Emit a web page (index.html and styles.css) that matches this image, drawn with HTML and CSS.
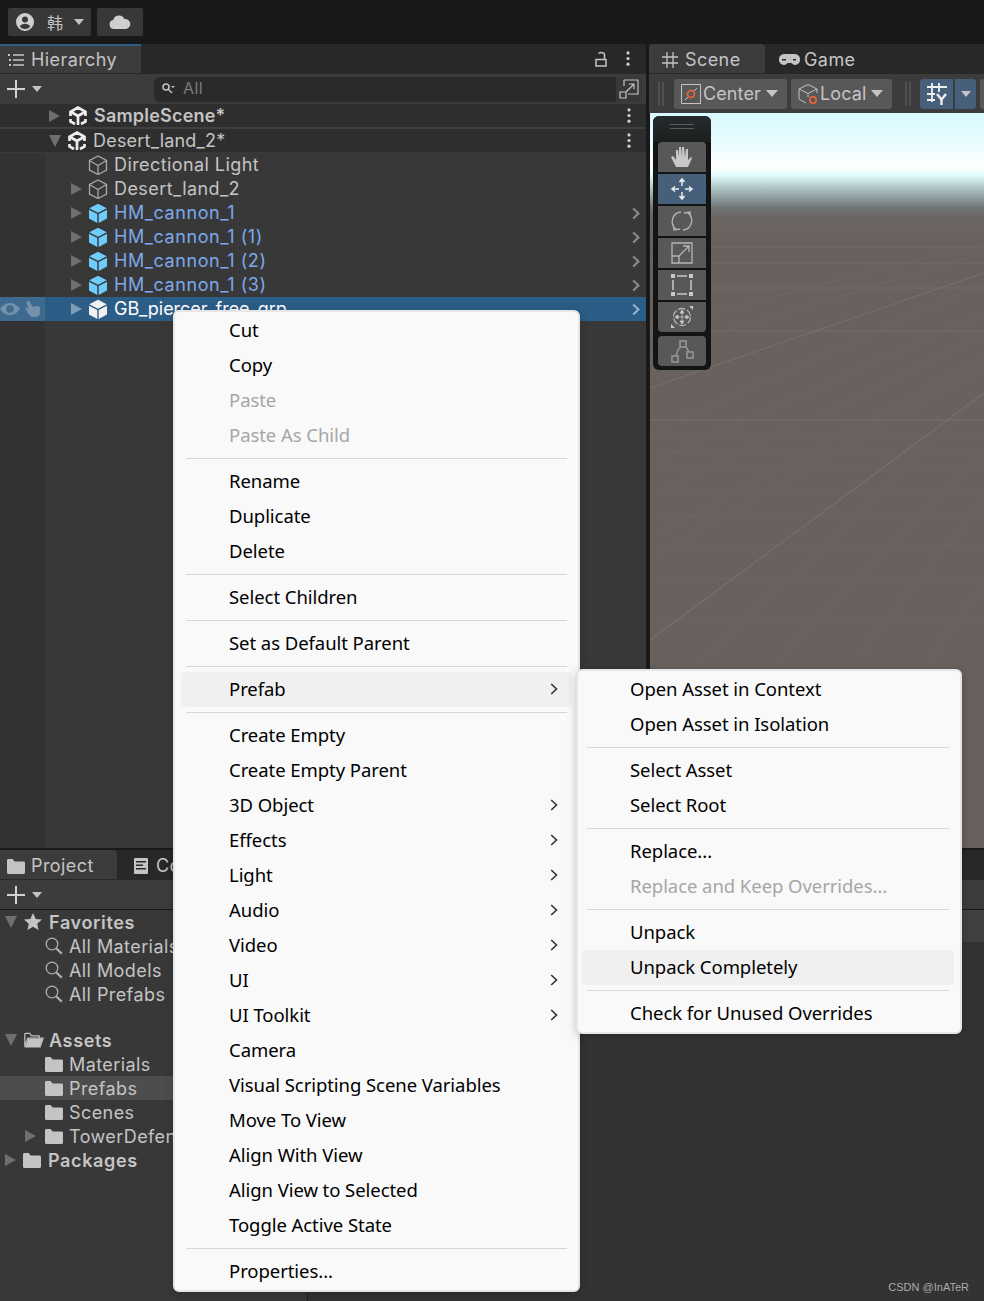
FILE: index.html
```html
<!DOCTYPE html>
<html lang="en">

<head>
    <meta charset="UTF-8">
    <title>Unity Editor</title>
    <link rel="stylesheet" href="styles.css">
</head>

<body>
    <svg class="sprite" width="0" height="0">
        <symbol id="i-unity" viewBox="0 0 20 20">
            <path d="M10 10 4 6.500M10 10l6-3.500M10 10v9M2.500 10V5.800L10 1.500l7.500 4.300V10M2.500 13v2.500L7 18M17.500 13v2.500L13 18" fill="none" stroke="currentColor" stroke-width="2.700"/>
        </symbol>
        <symbol id="i-cube" viewBox="0 0 20 20">
            <path d="M10 1 18.500 5.500V15L10 19.500 1.500 15V5.500zM1.500 5.500 10 10.500 18.500 5.500M10 10.500v9" fill="none" stroke="currentColor" stroke-width="1.300"/>
        </symbol>
        <symbol id="i-prefab" viewBox="0 0 20 20">
            <path d="M10 .8 18.800 5.300 10 9.800 1.200 5.300zM1 6.800l8.300 4.300v8.900L1 15.500zM19 6.800l-8.300 4.300v8.900l8.300-4.500z" fill="currentColor"/>
        </symbol>
        <symbol id="i-folder" viewBox="0 0 18 16">
            <path d="M0 2.500C0 1.700.6 1 1.400 1h4.200l2 2.600h9C17.400 3.600 18 4.200 18 5v9.500c0 .8-.6 1.500-1.400 1.500H1.400C.6 16 0 15.300 0 14.500z" fill="currentColor"/>
        </symbol>
        <symbol id="i-folder-open" viewBox="0 0 20 16">
            <path d="M.8 14V2.200c0-.5.3-.8.800-.8h4l2 2.400h7c.5 0 .8.300.8.800v1.300M.8 14.500l3-8.400h15.400l-3 8.900H1.400z" fill="none" stroke="currentColor" stroke-width="1.200"/>
            <path d="M1.400 15l2.800-8.300h14.300L15.800 15z" fill="currentColor"/>
        </symbol>
        <symbol id="i-search" viewBox="0 0 18 18">
            <circle cx="7" cy="7" r="5.800" fill="none" stroke="currentColor" stroke-width="1.300"/>
            <path d="M11.200 11.200l5.600 5.600" stroke="currentColor" stroke-width="2.200"/>
        </symbol>
        <symbol id="i-chevron" viewBox="0 0 8 12">
            <path d="M1.200 1 6.500 6 1.200 11" fill="none" stroke="currentColor"/>
        </symbol>
        <symbol id="i-kebab" viewBox="0 0 4 16">
            <circle cx="2" cy="2" r="1.700" fill="currentColor"/>
            <circle cx="2" cy="8" r="1.700" fill="currentColor"/>
            <circle cx="2" cy="14" r="1.700" fill="currentColor"/>
        </symbol>
        <symbol id="i-plus" viewBox="0 0 18 18">
            <path d="M9 0v18M0 9h18" stroke="currentColor" stroke-width="2"/>
        </symbol>
    </svg>

    <div class="app">
        <header class="topbar">
            <div class="top-btn account">
                <svg class="ic-user" viewBox="0 0 18 18"><path fill-rule="evenodd" d="M9 0a9 9 0 1 0 0 18A9 9 0 0 0 9 0zm0 3.500a3 3 0 1 1 0 6 3 3 0 0 1 0-6zM3.800 13.400c1-1.800 3-2.600 5.200-2.600s4.200.8 5.200 2.600A6.800 6.800 0 0 1 9 16a6.800 6.800 0 0 1-5.200-2.600z" fill="#cfcfcf"/></svg>
                <span class="account-name">韩</span>
                <i class="caret"></i>
            </div>
            <div class="top-btn cloud">
                <svg class="ic-cloud" viewBox="0 0 22 14"><path d="M5 14a4.500 4.500 0 0 1-.8-8.900A6 6 0 0 1 15.500 4 5 5 0 0 1 17 14z" fill="#cfcfcf"/></svg>
            </div>
        </header>

        <main class="workspace">
            <section class="panel hierarchy">
                <div class="tabbar">
                    <div class="tab tab-first">
                        <svg class="ic-tab" viewBox="0 0 16 14"><path d="M5 2h11M5 7h11M5 12h11" stroke="#c4c4c4" stroke-width="1.300"/><path d="M0 1h2v2H0zM1 6h2v2H1zM1 11h2v2H1z" fill="#c4c4c4"/></svg>
                        Hierarchy
                    </div>
                    <div class="tab-tools">
                        <svg class="ic-lock" viewBox="0 0 12 16"><path d="M1 8.500h10v6.500H1zM9.500 8V3.500C9.500 1.500 5.500 1 3.500 2.500" fill="none" stroke="#c4c4c4" stroke-width="1.500"/></svg>
                        <svg class="ic-kebab"><use href="#i-kebab"/></svg>
                    </div>
                </div>
                <div class="toolbar">
                    <svg class="ic-plus"><use href="#i-plus"/></svg>
                    <i class="caret"></i>
                    <div class="searchbox">
                        <svg class="ic-find" viewBox="0 0 14 12"><circle cx="4" cy="4" r="3" fill="none" stroke="#c4c4c4" stroke-width="1.500"/><path d="M6 6l4 4" stroke="#c4c4c4" stroke-width="1.500"/><path d="M9 3h4l-2 2z" fill="#c4c4c4"/></svg>
                        <span class="search-hint">All</span>
                        <span class="search-btn">
                            <svg viewBox="0 0 20 20"><path d="M5 1h14v14H9M5 1v6" fill="none" stroke="#c4c4c4" stroke-width="1.200"/><path d="M1 13h6v6H1zM7 13l8-8M10 5h5v5" fill="none" stroke="#c4c4c4" stroke-width="1.200"/></svg>
                        </span>
                    </div>
                </div>
                <div class="tree">
                    <div class="row scene-row">
                        <i class="arrow"></i>
                        <svg class="ic-node unity"><use href="#i-unity"/></svg>
                        <span class="label bold">SampleScene*</span>
                        <svg class="ic-kebab end"><use href="#i-kebab"/></svg>
                    </div>
                    <div class="row scene-row">
                        <i class="arrow open"></i>
                        <svg class="ic-node unity"><use href="#i-unity"/></svg>
                        <span class="label">Desert_land_2*</span>
                        <svg class="ic-kebab end"><use href="#i-kebab"/></svg>
                    </div>
                    <div class="row depth1">
                        <i class="arrow none"></i>
                        <svg class="ic-node"><use href="#i-cube"/></svg>
                        <span class="label">Directional Light</span>
                    </div>
                    <div class="row depth1">
                        <i class="arrow"></i>
                        <svg class="ic-node"><use href="#i-cube"/></svg>
                        <span class="label">Desert_land_2</span>
                    </div>
                    <div class="row depth1 prefab">
                        <i class="arrow"></i>
                        <svg class="ic-node"><use href="#i-prefab"/></svg>
                        <span class="label">HM_cannon_1</span>
                        <svg class="ic-more"><use href="#i-chevron"/></svg>
                    </div>
                    <div class="row depth1 prefab">
                        <i class="arrow"></i>
                        <svg class="ic-node"><use href="#i-prefab"/></svg>
                        <span class="label">HM_cannon_1 (1)</span>
                        <svg class="ic-more"><use href="#i-chevron"/></svg>
                    </div>
                    <div class="row depth1 prefab">
                        <i class="arrow"></i>
                        <svg class="ic-node"><use href="#i-prefab"/></svg>
                        <span class="label">HM_cannon_1 (2)</span>
                        <svg class="ic-more"><use href="#i-chevron"/></svg>
                    </div>
                    <div class="row depth1 prefab">
                        <i class="arrow"></i>
                        <svg class="ic-node"><use href="#i-prefab"/></svg>
                        <span class="label">HM_cannon_1 (3)</span>
                        <svg class="ic-more"><use href="#i-chevron"/></svg>
                    </div>
                    <div class="row depth1 selected">
                        <div class="row-gutter">
                            <svg class="ic-eye" viewBox="0 0 20 12"><path fill-rule="evenodd" d="M10 0c4.500 0 8 3 10 6-2 3-5.500 6-10 6S2 9 0 6c2-3 5.500-6 10-6zm0 2.200a3.800 3.800 0 1 0 0 7.600 3.800 3.800 0 0 0 0-7.600z" fill="#7391ab"/></svg>
                            <svg class="ic-hand" viewBox="0 0 18 18"><path d="M3 1.500c1-.8 2.200-.3 2.800.5l2.700 4.500 5-.5c1.500 0 2.500 1 2.500 2.500v4c0 2.500-2 4.500-4.500 4.500h-3c-1.500 0-2.500-1-3.300-2L1.500 9c-.5-1 .8-2 1.800-1.200L5 9 2.500 3.300c-.2-.7 0-1.300.5-1.800z" fill="#7391ab"/></svg>
                        </div>
                        <i class="arrow"></i>
                        <svg class="ic-node"><use href="#i-prefab"/></svg>
                        <span class="label">GB_piercer_free_grp</span>
                        <svg class="ic-more"><use href="#i-chevron"/></svg>
                    </div>
                </div>
            </section>

            <section class="panel scene">
                <div class="tabbar">
                    <div class="tab tab-scene">
                        <svg class="ic-tab" viewBox="0 0 16 16"><path d="M5 0v16M11 0v16M0 5h16M0 11h16" stroke="#c4c4c4" stroke-width="1.300"/></svg>
                        Scene
                    </div>
                    <div class="tab tab-plain tab-game">
                        <svg class="ic-game" viewBox="0 0 21 12"><path fill-rule="evenodd" d="M5 0h11a5 5 0 0 1 5 5.500A5 5 0 0 1 16 11c-2 0-3-2-4-2H9c-1 0-2 2-4 2a5 5 0 0 1-5-5.500A5 5 0 0 1 5 0zM3 5v1.500h4V5zm11 0v1.500h3V5z" fill="#c4c4c4"/></svg>
                        Game
                    </div>
                </div>
                <div class="scene-tools">
                    <i class="grip"></i>
                    <div class="drop">
                        <svg class="ic-pivot" viewBox="0 0 20 20"><path d="M.5.500h19v19H.5z" fill="none" stroke="#c4c4c4"/><circle cx="10" cy="10" r="3.500" fill="none" stroke="#f0653a" stroke-width="1.600"/><path d="M4 16l3-3M13 7l3-3" stroke="#c4c4c4"/></svg>
                        <span>Center</span><i class="caret"></i>
                    </div>
                    <div class="drop">
                        <svg class="ic-pivot" viewBox="0 0 20 20"><path d="M10 .5 19 5v4M1 5l9-4.500M1 5v10l7 4M1 5l9 4.500V13M10 9.500 19 5" fill="none" stroke="#c4c4c4"/><circle cx="15" cy="16" r="3.200" fill="none" stroke="#f0653a" stroke-width="1.600"/></svg>
                        <span>Local</span><i class="caret"></i>
                    </div>
                    <i class="grip"></i>
                    <div class="snap">
                        <svg viewBox="0 0 22 22"><path d="M6 0v19M13 0v9M1 4h20M1 11h8M1 17h8" stroke="#eee" stroke-width="1.800"/><path d="M11 11l4.500 5.500L20 11M15.500 16v6" fill="none" stroke="#eee" stroke-width="2.400"/></svg>
                    </div>
                    <div class="snap snap-drop"><i class="caret"></i></div>
                    <div class="snap-next"></div>
                </div>
                <div class="view">
                    <svg class="grid" viewBox="0 0 334 735" preserveAspectRatio="none">
                        <g stroke-width="1" fill="none">
                            <path d="M0 134H334M0 150H334M0 175H334M0 218H334" stroke="#726c68"/>
                            <path d="M0 307H334" stroke="#77726e"/>
                            <path d="M0 324H334M0 339H334M0 357H334M0 379H334M0 403H334M0 432H334M0 466H334M0 507H334" stroke="#6d6763"/>
                            <path d="M0 527 334 280" stroke="#7b7672"/>
                            <path d="M0 275 334 160" stroke="#77726e"/>
                            <path d="M0 215 334 130M0 240 334 140M0 320 334 170M0 350 334 200M0 385 334 220M0 425 334 245M0 445 334 255" stroke="#6d6763"/>
                            <path d="M40 560 334 280M117 560 334 340M195 560 334 385M270 560 334 470" stroke="#6d6763"/>
                        </g>
                    </svg>
                    <div class="overlay-tools">
                        <div class="overlay-handle"></div>
                        <div class="tool-group">
                            <div class="tool">
                                <svg viewBox="0 0 24 24"><path d="M6 22 1 12l2-1 3 4V5h2l1 7V2h2l1 10V2h2l1 10 1-8h2v11l3-3 1 1-4 9z" fill="#c8c8c8"/></svg>
                            </div>
                            <div class="tool active">
                                <svg viewBox="0 0 24 24"><path d="M12 9V2M12 15v7M9 12H2M15 12h7M9.500 5 12 2l2.500 3M9.500 19l2.500 3 2.500-3M5 9.500 2 12l3 2.500M19 9.500l3 2.500-3 2.500" fill="none" stroke="#eee" stroke-width="1.500"/></svg>
                            </div>
                            <div class="tool">
                                <svg viewBox="0 0 24 24"><path d="M11 3A9.500 9.500 0 0 0 6 20M3 15l1 6 6-1M13 21A9.500 9.500 0 0 0 18 4M21 9l-1-6-6 1" fill="none" stroke="#b5b5b5" stroke-width="1.300"/></svg>
                            </div>
                            <div class="tool">
                                <svg viewBox="0 0 24 24"><path d="M2 2h20v20H2zM2 15h7v7M8 16 19 5M13 5h6v6" fill="none" stroke="#b5b5b5" stroke-width="1.300"/></svg>
                            </div>
                            <div class="tool">
                                <svg viewBox="0 0 24 24"><path d="M7 3h10M7 21h10M3 7v10M21 7v10" stroke="#c8c8c8" stroke-width="1.500"/><path d="M1 1h4v4H1zM19 1h4v4h-4zM1 19h4v4H1zM19 19h4v4h-4z" fill="#c8c8c8"/></svg>
                            </div>
                            <div class="tool">
                                <svg viewBox="0 0 24 24"><circle cx="12" cy="12" r="8.500" fill="none" stroke="#b5b5b5" stroke-width="1.300" stroke-dasharray="7 2"/><path d="M12 6v12M6 12h12M12 5 10 8h4zM12 19l-2-3h4zM5 12l3-2v4zM19 12l-3-2v4z" fill="#c8c8c8" stroke="#c8c8c8" stroke-width=".8"/><path d="M19 1h4v4zM1 19l4 4H1z" fill="#c8c8c8"/></svg>
                            </div>
                        </div>
                        <div class="tool single">
                            <svg viewBox="0 0 24 24"><path d="M2 17h6v6H2zM10 2h6v6h-6zM17 13h6v6h-6zM6 17C7 13 8 10 10.500 7.500M15.500 7.500c1.500 1.500 2.500 3.500 3.500 5.500" fill="none" stroke="#999" stroke-width="1.500"/></svg>
                        </div>
                    </div>
                </div>
            </section>

            <section class="panel project">
                <div class="tabbar">
                    <div class="tab tab-project">
                        <svg class="ic-tab-folder"><use href="#i-folder"/></svg>
                        Project
                    </div>
                    <div class="tab tab-plain tab-console">
                        <svg class="ic-console" viewBox="0 0 14 16"><path fill-rule="evenodd" d="M1 0h12a1 1 0 0 1 1 1v14a1 1 0 0 1-1 1H1a1 1 0 0 1-1-1V1a1 1 0 0 1 1-1zm1 3v1.500h10V3zm0 3.500V8h7V6.500zM2 10v1.500h10V10z" fill="#c4c4c4"/></svg>
                        Console
                    </div>
                </div>
                <div class="toolbar">
                    <svg class="ic-plus"><use href="#i-plus"/></svg>
                    <i class="caret"></i>
                </div>
                <div class="project-body">
                    <div class="folders">
                        <div class="row top">
                            <i class="arrow open"></i>
                            <svg class="ic-star" viewBox="0 0 18 18"><path d="M9 0l2.700 6 6.300.6-4.800 4.200L14.600 17 9 13.700 3.400 17l1.400-6.200L0 6.600 6.300 6z" fill="#c4c4c4"/></svg>
                            <span class="label bold">Favorites</span>
                        </div>
                        <div class="row sub">
                            <svg class="ic-find-row"><use href="#i-search"/></svg>
                            <span class="label">All Materials</span>
                        </div>
                        <div class="row sub">
                            <svg class="ic-find-row"><use href="#i-search"/></svg>
                            <span class="label">All Models</span>
                        </div>
                        <div class="row sub">
                            <svg class="ic-find-row"><use href="#i-search"/></svg>
                            <span class="label">All Prefabs</span>
                        </div>
                        <div class="row-space"></div>
                        <div class="row top">
                            <i class="arrow open"></i>
                            <svg class="ic-folder-open"><use href="#i-folder-open"/></svg>
                            <span class="label bold">Assets</span>
                        </div>
                        <div class="row sub">
                            <svg class="ic-folder"><use href="#i-folder"/></svg>
                            <span class="label">Materials</span>
                        </div>
                        <div class="row sub current">
                            <svg class="ic-folder"><use href="#i-folder"/></svg>
                            <span class="label">Prefabs</span>
                        </div>
                        <div class="row sub">
                            <svg class="ic-folder"><use href="#i-folder"/></svg>
                            <span class="label">Scenes</span>
                        </div>
                        <div class="row sub has-arrow">
                            <i class="arrow"></i>
                            <svg class="ic-folder"><use href="#i-folder"/></svg>
                            <span class="label">TowerDefense</span>
                        </div>
                        <div class="row top closed">
                            <i class="arrow"></i>
                            <svg class="ic-folder"><use href="#i-folder"/></svg>
                            <span class="label bold">Packages</span>
                        </div>
                    </div>
                    <div class="files">
                        <div class="files-head"></div>
                    </div>
                </div>
            </section>
        </main>

        <div class="menu main-menu">
            <div class="item">Cut</div>
            <div class="item">Copy</div>
            <div class="item off">Paste</div>
            <div class="item off">Paste As Child</div>
            <div class="sep"></div>
            <div class="item">Rename</div>
            <div class="item">Duplicate</div>
            <div class="item">Delete</div>
            <div class="sep"></div>
            <div class="item">Select Children</div>
            <div class="sep"></div>
            <div class="item">Set as Default Parent</div>
            <div class="sep"></div>
            <div class="item hover">Prefab<svg class="ic-sub"><use href="#i-chevron"/></svg></div>
            <div class="sep"></div>
            <div class="item">Create Empty</div>
            <div class="item">Create Empty Parent</div>
            <div class="item">3D Object<svg class="ic-sub"><use href="#i-chevron"/></svg></div>
            <div class="item">Effects<svg class="ic-sub"><use href="#i-chevron"/></svg></div>
            <div class="item">Light<svg class="ic-sub"><use href="#i-chevron"/></svg></div>
            <div class="item">Audio<svg class="ic-sub"><use href="#i-chevron"/></svg></div>
            <div class="item">Video<svg class="ic-sub"><use href="#i-chevron"/></svg></div>
            <div class="item">UI<svg class="ic-sub"><use href="#i-chevron"/></svg></div>
            <div class="item">UI Toolkit<svg class="ic-sub"><use href="#i-chevron"/></svg></div>
            <div class="item">Camera</div>
            <div class="item">Visual Scripting Scene Variables</div>
            <div class="item">Move To View</div>
            <div class="item">Align With View</div>
            <div class="item">Align View to Selected</div>
            <div class="item">Toggle Active State</div>
            <div class="sep"></div>
            <div class="item">Properties...</div>
        </div>

        <div class="menu sub-menu">
            <div class="item">Open Asset in Context</div>
            <div class="item">Open Asset in Isolation</div>
            <div class="sep"></div>
            <div class="item">Select Asset</div>
            <div class="item">Select Root</div>
            <div class="sep"></div>
            <div class="item">Replace...</div>
            <div class="item off">Replace and Keep Overrides...</div>
            <div class="sep"></div>
            <div class="item">Unpack</div>
            <div class="item hover">Unpack Completely</div>
            <div class="sep"></div>
            <div class="item">Check for Unused Overrides</div>
        </div>

        <div class="watermark">CSDN @InATeR</div>
    </div>
</body>

</html>
```

FILE: styles.css
```css
html,
body {
    margin: 0;
    background: #191919;
}

.sprite {
    position: absolute;
}

.app {
    position: relative;
    overflow: hidden;
    width: 984px;
    height: 1301px;
    background: #191919;
    color: #c4c4c4;
    font-family: Inter, "Noto Sans", sans-serif;
    font-size: 18px;
    letter-spacing: 0.42px;
}

svg {
    display: block;
    flex: none;
}

.caret {
    display: block;
    flex: none;
    width: 0;
    height: 0;
    border-left: 5px solid transparent;
    border-right: 5px solid transparent;
    border-top: 6px solid #c4c4c4;
}

/* top bar */

.topbar {
    display: flex;
    gap: 6px;
    box-sizing: border-box;
    height: 44px;
    padding: 8px 8px 0;
}

.top-btn {
    display: flex;
    align-items: center;
    height: 28px;
    background: #383838;
    border-radius: 2px;
}

.account {
    width: 83px;
    padding-left: 8px;
    box-sizing: border-box;
}

.ic-user {
    width: 18px;
    height: 18px;
}

.account-name {
    margin-left: 13px;
    margin-right: 11px;
    font-family: "Noto Sans CJK SC", sans-serif;
    font-size: 16px;
    letter-spacing: 0;
}

.cloud {
    justify-content: center;
    width: 46px;
}

.ic-cloud {
    width: 22px;
    height: 14px;
}

/* panels */

.workspace {
    display: grid;
    grid-template-columns: 646px 335px;
    grid-template-rows: 804px 453px;
    column-gap: 3px;
}

.panel {
    min-width: 0;
}

.project {
    grid-column: 1 / 3;
    padding-top: 2px;
}

.tabbar {
    display: flex;
    height: 29px;
    background: #282828;
}

.tab {
    display: flex;
    align-items: center;
    box-sizing: border-box;
    height: 29px;
    padding-top: 2px;
}

.tab-first {
    width: 141px;
    padding-left: 8px;
    padding-top: 0;
    background: #3c3c3c;
    border-top: 2px solid #2c5d87;
}

.tab-scene {
    width: 116px;
    padding-left: 13px;
    background: #3c3c3c;
    border-radius: 4px 4px 0 0;
}

.tab-project {
    width: 117px;
    padding-left: 7px;
    background: #3c3c3c;
    border-radius: 0 4px 0 0;
}

.tab-plain {
    padding-left: 13px;
    gap: 8px;
}

.tab-game {
    padding-left: 14px;
}

.tab-console {
    padding-left: 17px;
}

.ic-tab {
    width: 16px;
    height: 16px;
    margin-right: 7px;
}

.ic-tab-folder {
    width: 18px;
    height: 16px;
    margin-right: 6px;
    color: #c4c4c4;
}

.ic-game {
    width: 21px;
    height: 12px;
    margin-right: -4px;
}

.ic-console {
    width: 14px;
    height: 16px;
}

.tab-tools {
    display: flex;
    align-items: center;
    gap: 19px;
    margin-left: auto;
    padding-right: 16px;
}

.ic-lock {
    width: 12px;
    height: 16px;
}

.ic-kebab {
    width: 4px;
    height: 15px;
    color: #d2d2d2;
}

.toolbar {
    display: flex;
    align-items: center;
    box-sizing: border-box;
    height: 31px;
    padding-left: 7px;
    background: #3c3c3c;
    border-top: 1px solid #282828;
}

.project .toolbar {
    height: 30px;
}

.ic-plus {
    width: 18px;
    height: 18px;
    margin-right: 7px;
    color: #d2d2d2;
}

.searchbox {
    display: flex;
    align-items: center;
    box-sizing: border-box;
    width: 488px;
    height: 25px;
    margin-left: 112px;
    padding-left: 8px;
    background: #2a2a2a;
    border-radius: 6px;
    font-size: 16px;
}

.ic-find {
    width: 14px;
    height: 12px;
}

.search-hint {
    margin-left: 7px;
    padding-bottom: 2px;
    color: #7a7a7a;
}

.search-btn {
    display: flex;
    align-items: center;
    justify-content: center;
    width: 26px;
    height: 25px;
    margin-left: auto;
    background: #383838;
    border-radius: 0 6px 6px 0;
}

.search-btn svg {
    width: 20px;
    height: 20px;
}

/* tree rows */

.tree {
    height: 744px;
    background: linear-gradient(90deg, #333 45px, #383838 45px);
}

.depth1 .label {
    padding-bottom: 2px;
}

.row {
    position: relative;
    display: flex;
    align-items: center;
    box-sizing: border-box;
    height: 24px;
}

.arrow {
    display: block;
    flex: none;
    width: 0;
    height: 0;
    border-top: 6.500px solid transparent;
    border-bottom: 6.500px solid transparent;
    border-left: 11px solid #6f6f6f;
}

.arrow.open {
    border-left: 6.500px solid transparent;
    border-right: 6.500px solid transparent;
    border-top: 12px solid #6f6f6f;
    border-bottom: 0;
}

.arrow.none {
    border-left-color: transparent;
}

.scene-row {
    padding-left: 49px;
    background: #2e2e2e;
}

.scene-row .bold {
    letter-spacing: 0.5px;
}

.scene-row:first-child {
    height: 25px;
    border-bottom: 2px solid #3f3f3f;
}

.scene-row:nth-child(2) {
    height: 24px;
    border-bottom: 1px solid #3a3a3a;
}

.scene-row .label {
    letter-spacing: 0.2px;
}

.scene-row .ic-node {
    margin-left: 8px;
}

.scene-row .arrow.open {
    margin-right: -2px;
}

.ic-node {
    width: 20px;
    height: 20px;
    margin-left: 6px;
    color: #a8a8a8;
}

.ic-node.unity {
    color: #ececec;
}

.label {
    margin-left: 6px;
    white-space: nowrap;
}

.bold {
    font-weight: 600;
    letter-spacing: 0.65px;
}

.ic-kebab.end {
    margin-left: auto;
    margin-right: 15px;
}

.depth1 {
    padding-left: 71px;
}

.prefab {
    color: #7baaec;
    letter-spacing: 0.58px;
}

.prefab .ic-node {
    color: #6fcdfb;
}

.ic-more {
    width: 8px;
    height: 13px;
    margin-left: auto;
    margin-right: 6px;
    color: #8a8a8a;
    stroke-width: 2.2px;
}

.selected {
    background: #2c5d87;
    color: #fff;
    letter-spacing: -0.05px;
}

.selected .ic-node {
    color: #f2f2f2;
}

.selected .ic-more {
    color: #8fb0cc;
}

.selected .arrow {
    border-left-color: #7f9db6;
}

.row-gutter {
    position: absolute;
    left: 0;
    top: 0;
    display: flex;
    align-items: center;
    gap: 4px;
    width: 45px;
    height: 24px;
    background: #3f6a90;
}

.ic-eye {
    width: 20px;
    height: 12px;
}

.ic-hand {
    width: 18px;
    height: 18px;
}

/* scene */

.scene-tools {
    display: flex;
    align-items: center;
    box-sizing: border-box;
    height: 40px;
    padding-left: 9px;
    background: #3c3c3c;
    border-top: 1px solid #282828;
}

.grip {
    display: block;
    flex: none;
    width: 2px;
    height: 24px;
    margin-right: 10px;
    border-left: 2px solid #505050;
    border-right: 2px solid #505050;
}

.drop {
    display: flex;
    flex: none;
    align-items: center;
    box-sizing: border-box;
    height: 30px;
    margin-right: 4px;
    padding-left: 7px;
    background: #585858;
    border-radius: 3px;
    font-size: 18px;
    letter-spacing: 0.1px;
}

.drop:nth-child(2) {
    width: 113px;
}

.drop:nth-child(3) {
    width: 101px;
    margin-right: 13px;
}

.drop .caret {
    margin-left: 5px;
    border-left-width: 6px;
    border-right-width: 6px;
    border-top-width: 7px;
}

.ic-pivot {
    width: 20px;
    height: 20px;
    margin-right: 2px;
}

.snap {
    display: flex;
    flex: none;
    align-items: center;
    justify-content: center;
    width: 33px;
    height: 30px;
    margin-left: -1px;
    background: #46607c;
    border-radius: 3px 0 0 3px;
}

.snap svg {
    width: 22px;
    height: 22px;
}

.snap-drop {
    width: 21px;
    margin-left: 2px;
    border-radius: 0 3px 3px 0;
}

.snap-next {
    flex: none;
    width: 10px;
    height: 30px;
    margin-left: 4px;
    background: #585858;
    border-radius: 3px 0 0 3px;
}

.view {
    position: relative;
    height: 735px;
    margin-left: 1px;
    background: linear-gradient(180deg, #d8faff 0, #eefdff 36px, #fff 54px, #e2fbfd 62px, #9db0b2 80px, #6f7474 95px, #6c6662 104px, #68615d 130px, #68615d 100%);
}

.grid {
    display: block;
    width: 100%;
    height: 100%;
}

.overlay-tools {
    position: absolute;
    left: 3px;
    top: 3px;
    box-sizing: border-box;
    width: 58px;
    height: 254px;
    padding: 0 5px;
    background: #141414;
    border-radius: 6px;
}

.overlay-handle {
    position: relative;
    height: 26px;
    margin: 0 -5px;
    background: linear-gradient(180deg, #252b2d, #1c1f20);
    border-radius: 6px 6px 0 0;
}

.overlay-handle::after {
    content: "";
    position: absolute;
    left: 17px;
    top: 8px;
    width: 24px;
    height: 3px;
    border-top: 1px solid #5c5c5c;
    border-bottom: 1px solid #5c5c5c;
}

.tool-group {
    display: flex;
    flex-direction: column;
    gap: 2px;
}

.tool {
    display: flex;
    align-items: center;
    justify-content: center;
    height: 30px;
    background: #585858;
}

.tool-group .tool:first-child {
    border-radius: 4px 4px 0 0;
}

.tool-group .tool:last-child {
    border-radius: 0 0 4px 4px;
}

.tool svg {
    width: 24px;
    height: 24px;
}

.tool.active {
    background: #46607c;
}

.tool.single {
    margin-top: 4px;
    border-radius: 4px;
}

/* project */

.project-body {
    display: flex;
    height: 392px;
    margin-top: 1px;
}

.folders {
    box-sizing: border-box;
    width: 308px;
    background: #383838;
    border-right: 1px solid #1f1f1f;
}

.files {
    flex: 1;
    background: #333;
}

.files-head {
    height: 32px;
    background: #404040;
}

.top {
    padding-left: 5px;
}

.top .ic-star {
    width: 18px;
    height: 18px;
    margin-left: 7px;
}

.top .ic-folder-open {
    width: 20px;
    height: 16px;
    margin-left: 7px;
    margin-right: -1px;
    color: #c4c4c4;
}

.top .ic-folder {
    margin-left: 7px;
}

.closed .label {
    margin-left: 7px;
}

.top .ic-star + .label {
    margin-left: 7px;
}

.sub {
    padding-left: 45px;
}

.has-arrow {
    padding-left: 25px;
}

.has-arrow .ic-folder {
    margin-left: 9px;
}

.current {
    background: #4d4d4d;
}

.ic-folder {
    width: 18px;
    height: 16px;
    color: #c4c4c4;
}

.ic-find-row {
    width: 18px;
    height: 18px;
    color: #b0b0b0;
}

.row-space {
    height: 22px;
}

/* context menus */

.menu {
    position: absolute;
    box-sizing: border-box;
    background: #f9f9f9;
    border: 2px solid #e6e6e6;
    border-radius: 6px;
    box-shadow: 0 2px 10px rgba(0, 0, 0, 0.22);
    color: #000;
    font-family: "Noto Sans", sans-serif;
    font-size: 18.500px;
    letter-spacing: -0.06px;
}

.main-menu {
    left: 173px;
    top: 310px;
    width: 407px;
    height: 982px;
    padding: 1px 6px 0;
}

.sub-menu {
    left: 576px;
    top: 669px;
    width: 386px;
    height: 365px;
    padding: 1px 6px 0 4px;
}

.item {
    display: flex;
    align-items: center;
    justify-content: space-between;
    box-sizing: border-box;
    height: 35px;
    padding-bottom: 2px;
    padding-left: 48px;
    padding-right: 14px;
    border-radius: 4px;
    white-space: nowrap;
}

.off {
    color: #a6a6a6;
}

.hover {
    background: #f0f0f0;
}

.sep {
    height: 1px;
    margin: 5px;
    background: #d6d6d6;
}

.ic-sub {
    width: 8px;
    height: 12px;
    color: #333;
    stroke-width: 1.600px;
}

.watermark {
    position: absolute;
    right: 15px;
    bottom: 8px;
    color: #aaa;
    font-family: "Liberation Sans", sans-serif;
    font-size: 11px;
    letter-spacing: 0;
}
```
